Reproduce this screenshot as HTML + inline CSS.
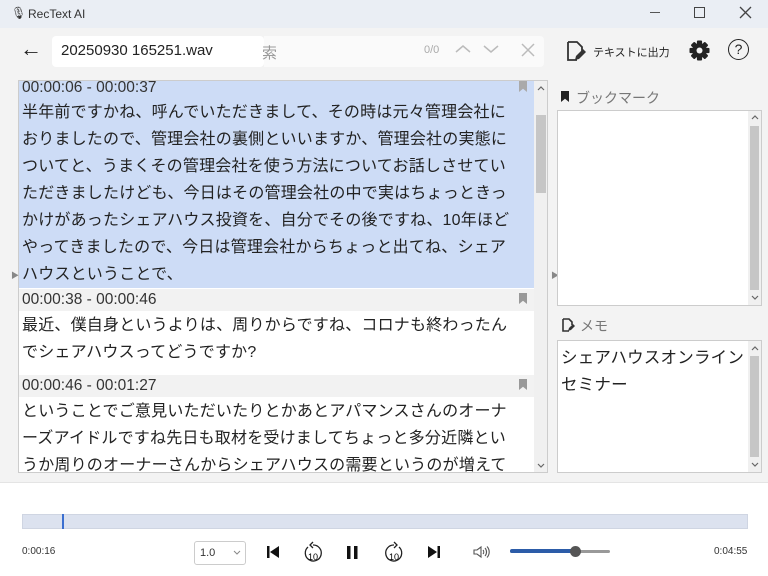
<!DOCTYPE html>
<html><head><meta charset="utf-8"><style>
*{margin:0;padding:0;box-sizing:border-box}
body{width:768px;height:576px;overflow:hidden;background:#f3f3f3;font-family:"Liberation Sans","Noto Sans CJK JP",sans-serif;color:#222;position:relative}
.a{position:absolute;white-space:nowrap}
.jp{font-size:16px;letter-spacing:0.2px;line-height:27px}
.ts{font-size:15.5px;color:#333}
</style></head><body>
<div class="a" style="left:0;top:0;width:768px;height:28px;background:#eaeef4"></div>
<div class="a" style="left:11px;top:6px;font-size:12px;color:#333">🎙</div>
<div class="a" style="left:28px;top:7px;font-size:12px;color:#333">RecText AI</div>
<div class="a" style="left:650px;top:12px;width:10px;height:1px;background:#555"></div>
<div class="a" style="left:694px;top:7px;width:11px;height:11px;border:1.3px solid #444"></div>
<svg class="a" style="left:739px;top:6px" width="13" height="13"><path d="M1 1L12 12M12 1L1 12" stroke="#444" stroke-width="1.3"/></svg>
<!-- toolbar -->
<div class="a" style="left:20px;top:36px;font-size:22px;color:#222">←</div>
<div class="a" style="left:52px;top:36px;width:212px;height:31px;background:#fff;border-radius:4px"></div>
<div class="a" style="left:61px;top:42px;font-size:15px">20250930 165251.wav</div>
<div class="a" style="left:264px;top:36px;width:280px;height:31px;background:#fafafa;border-radius:0 4px 4px 0"></div>
<div class="a" style="left:262px;top:42px;font-size:15px;color:#999">索</div>
<div class="a" style="left:424px;top:44px;font-size:11px;color:#aaa">0/0</div>
<svg class="a" style="left:455px;top:44px" width="16" height="10"><path d="M1 8L8 2L15 8" fill="none" stroke="#bbb" stroke-width="1.5"/></svg>
<svg class="a" style="left:483px;top:44px" width="16" height="10"><path d="M1 2L8 8L15 2" fill="none" stroke="#bbb" stroke-width="1.5"/></svg>
<svg class="a" style="left:521px;top:43px" width="14" height="14"><path d="M1 1L13 13M13 1L1 13" stroke="#bbb" stroke-width="1.5"/></svg>
<svg class="a" style="left:565px;top:40px" width="22" height="22" viewBox="0 0 22 22"><path d="M3 2h9l5 5v4M3 2v18h9" fill="none" stroke="#333" stroke-width="1.8"/><path d="M10 20l1-4 7-7 3 3-7 7z" fill="#333"/></svg>
<div class="a" style="left:593px;top:44px;font-size:11px">テキストに出力</div>
<svg class="a" style="left:689px;top:40px" width="21" height="21" viewBox="-10.5 -10.5 21 21"><g fill="#222"><rect x="-2.6" y="-10" width="5.2" height="20" rx="1"/><rect x="-2.6" y="-10" width="5.2" height="20" rx="1" transform="rotate(45)"/><rect x="-2.6" y="-10" width="5.2" height="20" rx="1" transform="rotate(90)"/><rect x="-2.6" y="-10" width="5.2" height="20" rx="1" transform="rotate(135)"/><circle r="7.3"/></g><circle r="3" fill="#f3f3f3"/></svg>
<div class="a" style="left:728px;top:39px;width:21px;height:21px;border:1.6px solid #222;border-radius:50%;font-size:14px;text-align:center;line-height:18px">?</div>
<!-- transcript -->
<div class="a" style="left:18px;top:80px;width:530px;height:393px;background:#fff;border:1px solid #ccc;overflow:hidden">
 <div class="a" style="left:0;top:0;width:515px;height:207px;background:#cddcf6"></div>
 <div class="a ts" style="left:3px;top:-2px">00:00:06 - 00:00:37</div>
 <div class="a jp" style="left:3px;top:18px">半年前ですかね、呼んでいただきまして、その時は元々管理会社に<br>おりましたので、管理会社の裏側といいますか、管理会社の実態に<br>ついてと、うまくその管理会社を使う方法についてお話しさせてい<br>ただきましたけども、今日はその管理会社の中で実はちょっときっ<br>かけがあったシェアハウス投資を、自分でその後ですね、10年ほど<br>やってきましたので、今日は管理会社からちょっと出てね、シェア<br>ハウスということで、</div>
 <div class="a" style="left:0;top:208px;width:515px;height:22px;background:#f2f2f2"></div>
 <div class="a ts" style="left:3px;top:210px">00:00:38 - 00:00:46</div>
 <div class="a jp" style="left:3px;top:231px">最近、僕自身というよりは、周りからですね、コロナも終わったん<br>でシェアハウスってどうですか?</div>
 <div class="a" style="left:0;top:294px;width:515px;height:22px;background:#f2f2f2"></div>
 <div class="a ts" style="left:3px;top:296px">00:00:46 - 00:01:27</div>
 <div class="a jp" style="left:3px;top:317px">ということでご意見いただいたりとかあとアパマンスさんのオーナ<br>ーズアイドルですね先日も取材を受けましてちょっと多分近隣とい<br>うか周りのオーナーさんからシェアハウスの需要というのが増えて</div>
 <div class="a" style="left:500px;top:0;width:8px;height:11px;background:#aaa;clip-path:polygon(0 0,100% 0,100% 100%,50% 70%,0 100%)"></div>
 <div class="a" style="left:500px;top:212px;width:8px;height:11px;background:#999;clip-path:polygon(0 0,100% 0,100% 100%,50% 70%,0 100%)"></div>
 <div class="a" style="left:500px;top:298px;width:8px;height:11px;background:#999;clip-path:polygon(0 0,100% 0,100% 100%,50% 70%,0 100%)"></div>
 <div class="a" style="left:515px;top:0;width:14px;height:393px;background:#f0f0f0"></div>
 <div class="a" style="left:517px;top:34px;width:10px;height:78px;background:#c6c6c6"></div>
 <svg class="a" style="left:518px;top:5px" width="8" height="5"><path d="M1 4L4 1L7 4" fill="none" stroke="#666" stroke-width="1.2"/></svg>
 <svg class="a" style="left:518px;top:382px" width="8" height="5"><path d="M1 1L4 4L7 1" fill="none" stroke="#666" stroke-width="1.2"/></svg>
</div>
<div class="a" style="left:11px;top:270px;font-size:8px;color:#888">▶</div>
<div class="a" style="left:551px;top:270px;font-size:8px;color:#888">▶</div>
<!-- right -->
<div class="a" style="left:561px;top:91px;width:8px;height:11px;background:#222;clip-path:polygon(0 0,100% 0,100% 100%,50% 70%,0 100%)"></div>
<div class="a" style="left:576px;top:88px;font-size:14px;color:#777">ブックマーク</div>
<div class="a" style="left:557px;top:110px;width:205px;height:196px;background:#fff;border:1px solid #ccc"></div>
<div class="a" style="left:748px;top:111px;width:13px;height:194px;background:#f0f0f0"></div>
<div class="a" style="left:750px;top:126px;width:9px;height:164px;background:#c6c6c6"></div>
<svg class="a" style="left:751px;top:115px" width="8" height="5"><path d="M1 4L4 1L7 4" fill="none" stroke="#666" stroke-width="1.2"/></svg>
<svg class="a" style="left:751px;top:295px" width="8" height="5"><path d="M1 1L4 4L7 1" fill="none" stroke="#666" stroke-width="1.2"/></svg>
<svg class="a" style="left:561px;top:318px" width="14" height="14" viewBox="0 0 14 14"><path d="M2 1h6l3 3v3M2 1v12h6" fill="none" stroke="#333" stroke-width="1.6"/><path d="M7 13l1-3 4-4 2 2-4 4z" fill="#333"/></svg>
<div class="a" style="left:580px;top:316px;font-size:14px;color:#777">メモ</div>
<div class="a" style="left:557px;top:340px;width:205px;height:133px;background:#fff;border:1px solid #ccc"></div>
<div class="a" style="left:748px;top:341px;width:13px;height:131px;background:#f0f0f0"></div>
<div class="a" style="left:750px;top:356px;width:9px;height:101px;background:#c6c6c6"></div>
<svg class="a" style="left:751px;top:346px" width="8" height="5"><path d="M1 4L4 1L7 4" fill="none" stroke="#666" stroke-width="1.2"/></svg>
<svg class="a" style="left:751px;top:462px" width="8" height="5"><path d="M1 1L4 4L7 1" fill="none" stroke="#666" stroke-width="1.2"/></svg>
<div class="a jp" style="left:561px;top:345px;font-size:16.5px">シェアハウスオンライン<br>セミナー</div>
<!-- bottom -->
<div class="a" style="left:0;top:482px;width:768px;height:94px;background:#fff;border-top:1px solid #e4e4e4"></div>
<div class="a" style="left:22px;top:514px;width:726px;height:15px;background:#dce2ef;border:1px solid #cfd5e2"></div>
<div class="a" style="left:62px;top:514px;width:2px;height:15px;background:#3b6fd0"></div>
<div class="a" style="left:22px;top:546px;font-size:10px;color:#333">0:00:16</div>
<div class="a" style="left:714px;top:546px;font-size:10px;color:#333">0:04:55</div>
<div class="a" style="left:194px;top:541px;width:52px;height:24px;border:1px solid #ccc;border-radius:3px;font-size:11px;padding:5px 0 0 5px;color:#333">1.0</div>
<svg class="a" style="left:233px;top:550px" width="8" height="5"><path d="M1 1L4 4L7 1" fill="none" stroke="#888" stroke-width="1"/></svg>
<svg class="a" style="left:265px;top:544px" width="16" height="16" viewBox="0 0 16 16"><rect x="2" y="2" width="2.5" height="12" fill="#111"/><path d="M14 2v12L5 8z" fill="#111"/></svg>
<svg class="a" style="left:302px;top:540px" width="22" height="26" viewBox="0 0 22 26"><path d="M6 7a8 8 0 1 0 5-2" fill="none" stroke="#222" stroke-width="1.3"/><path d="M11 2l-3 3 3 3" fill="none" stroke="#222" stroke-width="1.3"/><text x="11" y="20" font-size="9" text-anchor="middle" font-family="Liberation Sans">10</text></svg>
<svg class="a" style="left:346px;top:545px" width="14" height="16"><rect x="1" y="1" width="3.5" height="13" fill="#111"/><rect x="8" y="1" width="3.5" height="13" fill="#111"/></svg>
<svg class="a" style="left:383px;top:540px" width="22" height="26" viewBox="0 0 22 26"><path d="M16 7a8 8 0 1 1-5-2" fill="none" stroke="#222" stroke-width="1.3"/><path d="M11 2l3 3-3 3" fill="none" stroke="#222" stroke-width="1.3"/><text x="11" y="20" font-size="9" text-anchor="middle" font-family="Liberation Sans">10</text></svg>
<svg class="a" style="left:426px;top:544px" width="16" height="16" viewBox="0 0 16 16"><path d="M2 2v12l9-6z" fill="#111"/><rect x="11.5" y="2" width="2.5" height="12" fill="#111"/></svg>
<svg class="a" style="left:473px;top:545px" width="18" height="14" viewBox="0 0 18 14"><path d="M1 5h3l4-3v10l-4-3H1z" fill="none" stroke="#555" stroke-width="1.1"/><path d="M10 5a3 3 0 0 1 0 4M12 3a6 6 0 0 1 0 8M14 1.5a8 8 0 0 1 0 11" fill="none" stroke="#555" stroke-width="1.1"/></svg>
<div class="a" style="left:510px;top:550px;width:100px;height:3px;background:#999;border-radius:2px"></div>
<div class="a" style="left:510px;top:549px;width:66px;height:4px;background:#2c5ca8;border-radius:2px"></div>
<div class="a" style="left:570px;top:546px;width:11px;height:11px;background:#555;border-radius:50%"></div>
</body></html>
